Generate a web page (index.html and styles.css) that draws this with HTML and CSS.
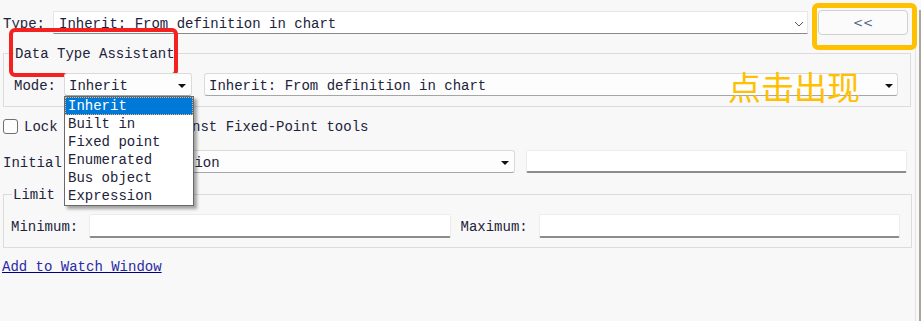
FILE: index.html
```html
<!DOCTYPE html>
<html lang="en">
<head>
  <meta charset="UTF-8">
  <title>Data Properties</title>
  <link rel="stylesheet" href="styles.css">
</head>
<body>
  <div class="window">
    <div class="page">

      <!-- Type -->
      <div class="row type-row">
        <span class="label">Type:</span>
        <div class="combo combo-type">
          <span>Inherit: From definition in chart</span>
          <svg class="chevron" width="10" height="6" viewBox="0 0 10 6"><polyline points="1,1 5,5 9,1" fill="none" stroke="#555" stroke-width="1"/></svg>
        </div>
        <button class="collapse-btn">&lt;&lt;<span class="mark mark-gold"></span></button>
      </div>

      <!-- Data Type Assistant -->
      <fieldset class="group assistant">
        <legend>Data Type Assistant<span class="mark mark-red"></span></legend>
        <div class="row mode-row">
          <span class="label">Mode:</span>
          <div class="combo combo-mode">
            <span>Inherit</span>
            <i class="tri"></i>
            <ul class="dropdown">
              <li class="selected">Inherit</li>
              <li>Built in</li>
              <li>Fixed point</li>
              <li>Enumerated</li>
              <li>Bus object</li>
              <li>Expression</li>
            </ul>
          </div>
          <div class="combo combo-rule">
            <span>Inherit: From definition in chart</span>
            <i class="tri"></i>
          </div>
          <span class="note">点击出现</span>
        </div>
      </fieldset>

      <!-- Lock -->
      <label class="row lock-row">
        <input type="checkbox" class="check">
        <span class="label">Lock data types against Fixed-Point tools</span>
      </label>

      <!-- Initial value -->
      <div class="row initial-row">
        <span class="label">Initial value:</span>
        <div class="combo combo-initial">
          <span>Expression</span>
          <i class="tri"></i>
        </div>
        <input type="text" class="edit edit-initial">
      </div>

      <!-- Limit range -->
      <fieldset class="group limits">
        <legend>Limit range</legend>
        <div class="row limit-row">
          <span class="label">Minimum:</span>
          <input type="text" class="edit edit-limit">
          <span class="label">Maximum:</span>
          <input type="text" class="edit edit-limit">
        </div>
      </fieldset>

      <a href="#" class="watch-link">Add to Watch Window</a>
    </div>
  </div>
</body>
</html>
```

FILE: styles.css
```css
body {
  margin: 0;
  background-color: #f8f8f8;
  font-family: 'Liberation Mono', 'DejaVu Sans Mono', monospace;
  font-size: 14px;
  color: #22223a;
}
.window {
  width: 916px;
  min-height: 100vh;
  padding-right: 3px;
  border-right: 2px solid #aba79f;
}
.page {
  width: 915px;
  min-height: 100vh;
  border-right: 1px solid #e4e4e4;
}
.row {
  display: flex;
  align-items: center;
}
.label {
  white-space: pre;
  padding-top: 2px;
}

/* combo boxes */
.combo {
  position: relative;
  box-sizing: border-box;
  height: 23px;
  display: flex;
  align-items: center;
  justify-content: space-between;
  background-color: #fdfdfd;
  border: 1px solid #dadada;
  border-bottom-color: #a6a6a6;
  border-radius: 3px;
  padding: 2px 5px 0 3px;
}
.tri {
  width: 0;
  height: 0;
  border-left: 4px solid transparent;
  border-right: 4px solid transparent;
  border-top: 4px solid #111;
}

/* Type row */
.type-row {
  margin-top: 10px;
  height: 25px;
  padding-left: 3px;
}
.combo-type {
  margin-left: 8px;
  width: 755px;
  background-color: #ffffff;
  border-color: #e6e6e6;
  border-bottom-color: #8a8a8a;
  border-radius: 0;
  padding-left: 5px;
  padding-right: 3px;
}
.collapse-btn {
  position: relative;
  margin-left: 10px;
  width: 90px;
  height: 25px;
  background-color: #fbfbfb;
  border: 1px solid #d0d0d0;
  border-radius: 4px;
  font-family: 'DejaVu Sans', sans-serif;
  font-size: 12px;
  color: #55678a;
  padding: 0;
}

/* annotation marks */
.mark {
  position: absolute;
  box-sizing: border-box;
  pointer-events: none;
}
.mark-gold {
  left: -7px;
  top: -8px;
  width: 105px;
  height: 47px;
  border: 5px solid #ffc000;
  border-radius: 6px;
}
.mark-red {
  left: -5px;
  top: -16px;
  width: 169px;
  height: 49px;
  border: 4px solid #f52020;
  border-radius: 6px;
}
.note {
  position: absolute;
  left: 714px;
  top: -3px;
  font-family: 'Noto Sans CJK SC', sans-serif;
  font-size: 33px;
  line-height: 33px;
  color: #ffc000;
}

/* group boxes */
.group {
  margin: 9px 4px 0 3px;
  border: 1px solid #dcdcdc;
  min-width: 0;
}
.group legend {
  position: relative;
  line-height: 18px;
  padding: 1px 1px 0;
}
.assistant {
  padding: 0 12px 10px 10px;
}
.mode-row {
  position: relative;
  margin-top: 10px;
  height: 23px;
}
.combo-mode {
  margin-left: 8px;
  width: 128px;
  padding-left: 4px;
}
.combo-rule {
  margin-left: 12px;
  flex: 1;
  padding-left: 4px;
  padding-right: 4px;
}

/* open list */
.dropdown {
  position: absolute;
  z-index: 10;
  left: -1px;
  top: 22px;
  width: 128px;
  margin: 0;
  padding: 0;
  list-style: none;
  background-color: #ffffff;
  border: 1px solid #6a6a6a;
  box-shadow: 3px 3px 3px rgba(0, 0, 0, 0.35);
}
.dropdown li {
  height: 18px;
  line-height: 19px;
  padding-left: 3px;
}
.dropdown li.selected {
  background-color: #0078d7;
  color: #ffffff;
  outline: 1px dotted #f0b070;
  outline-offset: -1px;
}

/* lock */
.lock-row {
  margin-top: 10px;
  height: 18px;
  padding-left: 3px;
}
.check {
  appearance: none;
  box-sizing: border-box;
  width: 15px;
  height: 15px;
  margin: 0 6px 0 0;
  background-color: #fdfdfd;
  border: 1px solid #707070;
  border-radius: 3px;
}

/* initial value */
.initial-row {
  margin-top: 15px;
  height: 23px;
  padding-left: 3px;
}
.combo-initial {
  margin-left: 10px;
  width: 384px;
  padding-left: 4px;
}
.edit {
  box-sizing: border-box;
  height: 24px;
  margin: 0;
  background-color: #ffffff;
  border: 1px solid #ececec;
  border-bottom: 2px solid #8c8c8c;
  border-radius: 2px;
  font: inherit;
}
.edit-initial {
  margin-left: 11px;
  width: 381px;
  height: 23px;
}

/* limits */
.limits {
  margin-top: 12px;
  padding: 0 11px 9px 6px;
  margin-right: 3px;
}
.limits legend {
  margin-left: 2px;
}
.limit-row {
  margin-top: 10px;
  height: 24px;
  padding-left: 1px;
}
.edit-limit {
  margin: 0 10px 0 11px;
  width: 362px;
}
.edit-limit:last-child {
  margin-right: 0;
}

.watch-link {
  display: inline-block;
  margin: 9px 0 0 2px;
  padding-top: 1px;
  line-height: 18px;
  color: #2a2aa8;
  text-decoration-color: #000080;
}
```
